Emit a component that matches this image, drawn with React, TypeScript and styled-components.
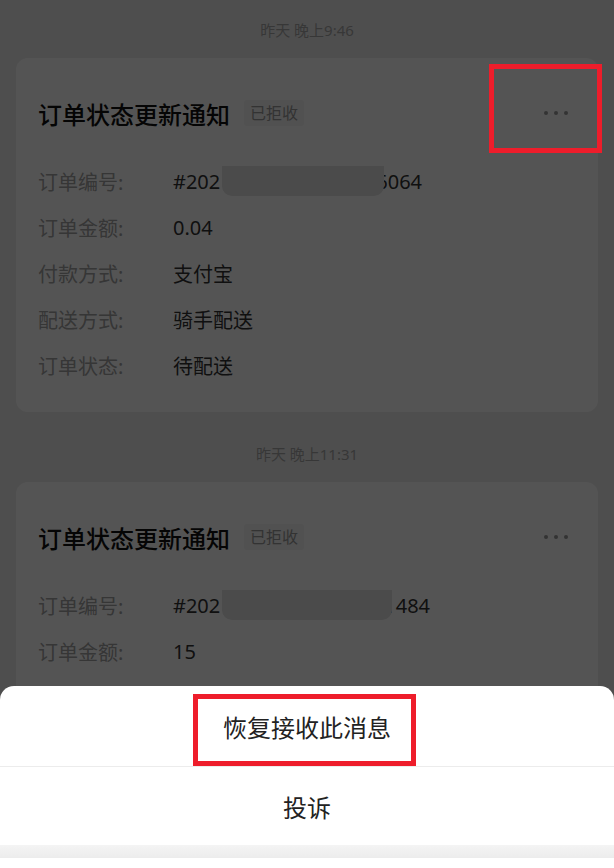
import React, { FC } from "react";
import styled, { createGlobalStyle } from "styled-components";

const GlobalStyle = createGlobalStyle`
  html, body {
    margin: 0;
    padding: 0;
    background: #ededed;
  }
  body {
    font-family: "Noto Sans", "Noto Sans CJK SC", sans-serif;
  }
`;

const Page = styled.div`
  position: relative;
  width: 614px;
  height: 868px;
  overflow: hidden;
  background: #ededed;
`;

const Feed = styled.div`
  position: relative;
  z-index: 0;
  display: flex;
  flex-direction: column;
  padding: 20px 16px 0 16px;
`;

const Timestamp = styled.div`
  height: 20px;
  line-height: 20px;
  text-align: center;
  font-size: 15px;
  color: #a8a8a8;
  margin-bottom: 18px;
`;

const Card = styled.div`
  background: #fff;
  border-radius: 12px;
  padding: 38px 30px 24px 22px;
  margin-bottom: 32px;
`;

const CardHeader = styled.div`
  display: flex;
  align-items: center;
  justify-content: space-between;
  height: 34px;
  margin-bottom: 28px;
`;

const TitleWrap = styled.div`
  display: flex;
  align-items: center;
  gap: 14px;
`;

const Title = styled.span`
  font-size: 24px;
  font-weight: 500;
  color: #111;
`;

const Badge = styled.span`
  height: 26px;
  line-height: 26px;
  padding: 0 6px;
  font-size: 16px;
  color: #9a9a9a;
  background: #f4f4f4;
  border-radius: 3px;
`;

const Dots = styled.div`
  display: flex;
  gap: 6px;
  span {
    width: 4px;
    height: 4px;
    border-radius: 50%;
    background: #9a9a9a;
  }
`;

const Row = styled.div`
  display: flex;
  align-items: center;
  height: 46px;
  font-size: 20px;
`;

const Label = styled.span`
  width: 135px;
  color: #a3a3a3;
`;

const Value = styled.span`
  color: #333;
  display: flex;
  align-items: center;
  white-space: nowrap;
`;

const Mask = styled.span<{ w: number }>`
  position: relative;
  z-index: 1;
  display: inline-block;
  width: ${(p) => p.w}px;
  height: 30px;
  margin: 0 -8px 0 2px;
  background: #e2e2e2;
  border-radius: 0 0 10px 10px;
`;

const Overlay = styled.div`
  position: absolute;
  inset: 0;
  z-index: 1;
  background: rgba(0, 0, 0, 0.67);
`;

const Sheet = styled.div`
  position: absolute;
  z-index: 2;
  left: 0;
  right: 0;
  bottom: 0;
  background: #fff;
  border-radius: 14px 14px 0 0;
  display: flex;
  flex-direction: column;
`;

const Option = styled.div<{ h: number }>`
  height: ${(p) => p.h}px;
  display: flex;
  align-items: center;
  justify-content: center;
  font-size: 24px;
  color: #222;
`;

const Divider = styled.div`
  height: 1px;
  background: #ececec;
`;

const Gap = styled.div`
  height: 13px;
  background: linear-gradient(#f4f4f4, #ececec);
`;

const CancelStub = styled.div`
  height: 10px;
  background: #fff;
`;

const Highlight = styled.div<{ x: number; y: number; w: number; h: number }>`
  position: absolute;
  z-index: 3;
  left: ${(p) => p.x}px;
  top: ${(p) => p.y}px;
  width: ${(p) => p.w}px;
  height: ${(p) => p.h}px;
  box-sizing: border-box;
  border: 5px solid #ee1d2b;
`;

interface Field {
  label: string;
  value: React.ReactNode;
}

interface Message {
  time: string;
  fields: Field[];
}

const messages: Message[] = [
  {
    time: "昨天 晚上9:46",
    fields: [
      {
        label: "订单编号:",
        value: (
          <>
            #202
            <Mask w={162} />
            6064
          </>
        ),
      },
      { label: "订单金额:", value: "0.04" },
      { label: "付款方式:", value: "支付宝" },
      { label: "配送方式:", value: "骑手配送" },
      { label: "订单状态:", value: "待配送" },
    ],
  },
  {
    time: "昨天 晚上11:31",
    fields: [
      {
        label: "订单编号:",
        value: (
          <>
            #202
            <Mask w={170} />
            1484
          </>
        ),
      },
      { label: "订单金额:", value: "15" },
      { label: "付款方式:", value: "微信支付" },
      { label: "配送方式:", value: "骑手配送" },
      { label: "订单状态:", value: "待配送" },
    ],
  },
];

const MessageCard: FC<{ msg: Message }> = ({ msg }) => (
  <>
    <Timestamp>{msg.time}</Timestamp>
    <Card>
      <CardHeader>
        <TitleWrap>
          <Title>订单状态更新通知</Title>
          <Badge>已拒收</Badge>
        </TitleWrap>
        <Dots>
          <span />
          <span />
          <span />
        </Dots>
      </CardHeader>
      {msg.fields.map((f) => (
        <Row key={f.label}>
          <Label>{f.label}</Label>
          <Value>{f.value}</Value>
        </Row>
      ))}
    </Card>
  </>
);

const App: FC = () => {
  return (
    <Page>
      <GlobalStyle />
      <Feed>
        {messages.map((m) => (
          <MessageCard key={m.time} msg={m} />
        ))}
      </Feed>
      <Overlay />
      <Sheet>
        <Option h={80}>恢复接收此消息</Option>
        <Divider />
        <Option h={78}>投诉</Option>
        <Gap />
        <CancelStub />
      </Sheet>
      <Highlight x={489} y={64} w={113} h={89} />
      <Highlight x={193} y={694} w={223} h={72} />
    </Page>
  );
};

export default App;
